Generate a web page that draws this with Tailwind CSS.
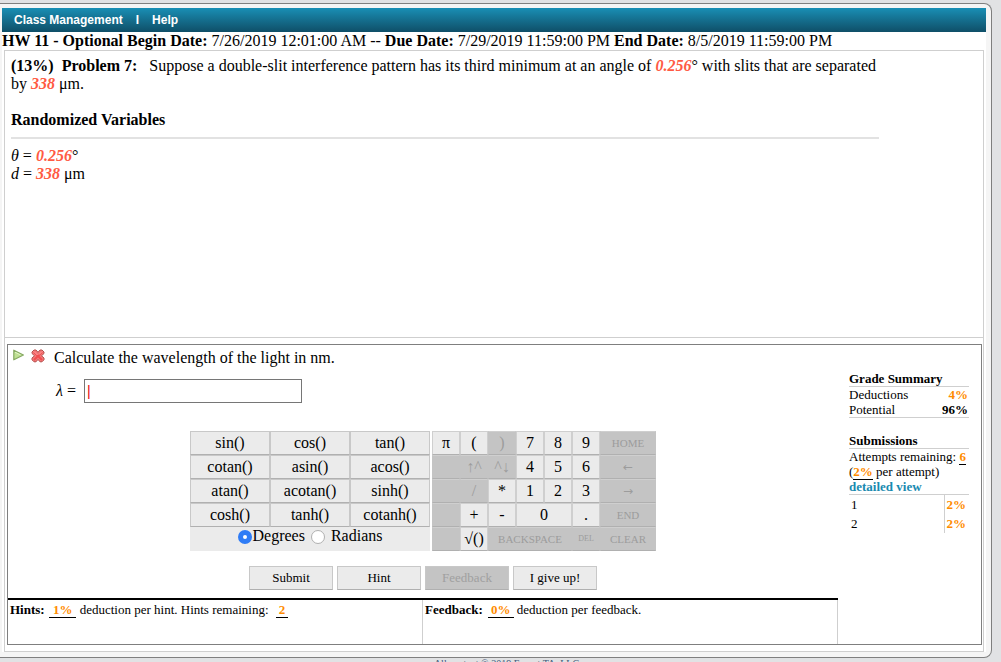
<!DOCTYPE html>
<html lang="en">
<head>
<meta charset="utf-8">
<meta name="viewport" content="width=device-width, initial-scale=1">
<title>HW 11 - Problem 7</title>
<script src="https://cdn.jsdelivr.net/npm/@tailwindcss/browser@4"></script>
</head>
<body class="bg-[#e1e2e4] font-['Liberation_Serif',serif] text-black">
<div class="h-screen overflow-hidden pt-[3px]">
<div class="mr-[9px] rounded-r-lg border-y border-r border-[#7f7f7f] bg-[#f5f5f5] pt-1 pr-[5px] pb-[5px] pl-[2px]">
  <nav class="flex h-6 items-center gap-[13px] bg-linear-to-b from-[#198fb5] to-[#0f4f68] pl-3 font-['Liberation_Sans',sans-serif] text-[12px] font-bold text-white">
    <a href="#">Class Management</a><span>I</span><a href="#">Help</a>
  </nav>
  <div class="bg-white pr-[2px]">
    <h1 class="h-[18px] text-[16px] leading-[18px] whitespace-nowrap"><b>HW 11 - Optional Begin Date:</b> 7/26/2019 12:01:00 AM -- <b>Due Date:</b> 7/29/2019 11:59:00 PM <b>End Date:</b> 8/5/2019 11:59:00 PM</h1>
    <main class="ml-[2px] border border-[#cfcfcf]">
      <section class="h-[287px] border-b border-[#cfcfcf] px-[6px] pt-[6px] text-[16px] leading-[18px]">
        <p class="max-w-[872px]"><b>(13%)</b>&nbsp; <b>Problem 7:</b> &nbsp; Suppose a double-slit interference pattern has its third minimum at an angle of <b class="text-[#ff5a43] italic">0.256</b>° with slits that are separated by <b class="text-[#ff5a43] italic">338</b> μm.</p>
        <h2 class="mt-[18px] font-bold">Randomized Variables</h2>
        <hr class="mt-2 mb-2 max-w-[868px] border-t-2 border-[#e2e2e2]">
        <p><i>θ</i> = <b class="text-[#ff5a43] italic">0.256</b>°</p>
        <p><i>d</i> = <b class="text-[#ff5a43] italic">338</b> μm</p>
      </section>
      <section class="mt-[6px] mr-[1px] mb-[6px] ml-[2px] flex border border-[#7f7f7f]">
        <div class="min-w-0 flex-1">
          <div class="flex h-[34px] pt-1 pl-[5px]">
            <svg class="h-3 w-3" viewBox="0 0 12 12"><path d="M.8 1.2 10.4 6 .8 10.8Z" fill="#bfe093" stroke="#86a862" stroke-width="1.2" stroke-linejoin="round"/><path d="M2 3.2 7.6 6" fill="none" stroke="#e2f5c6"/></svg>
            <svg class="ml-[6px] h-[14px] w-[14px]" viewBox="0 0 14 14"><path d="M3 1 5 1 7 3.3 9 1 11 1 13 3 13 4.5 10.5 6.8 13 9 13 10.8 11 12.8 9 12.8 7 10.4 5 12.8 3 12.8 1 10.8 1 9 3.5 6.8 1 4.5 1 3Z" fill="#f47a7a" stroke="#b5504e" stroke-width="1"/><path d="M3 3 11 11M11 3 3 11" stroke="#f04e50" stroke-width="2"/><path d="M3 2.5 6.5 6M11 2.5 8 5.5" stroke="#ffb5b5" stroke-width="1"/></svg>
            <p class="ml-[9px] text-[16px] leading-[18px]">Calculate the wavelength of the light in nm.</p>
          </div>
          <div class="flex h-6 items-center pl-12 text-[16px]">
            <label for="ans" class="w-7 whitespace-nowrap"><i>λ</i> =</label>
            <input id="ans" type="text" value="|" class="h-6 w-[218px] border border-[#767676] bg-white px-[2px] font-['Liberation_Sans',sans-serif] text-[14px] text-red-600 outline-none">
          </div>
          <div class="mt-7 flex items-start justify-center gap-[2px]">
            <div class="w-60 bg-[#ebebeb]">
              <div class="grid grid-cols-3 text-[16px] leading-[22px] [&>button]:h-6 [&>button]:border [&>button]:border-[#c8c8c8] [&>button]:border-b-[#b0b0b0] [&>button]:bg-[#ebebeb]">
                <button>sin()</button><button>cos()</button><button>tan()</button>
                <button>cotan()</button><button>asin()</button><button>acos()</button>
                <button>atan()</button><button>acotan()</button><button>sinh()</button>
                <button>cosh()</button><button>tanh()</button><button>cotanh()</button>
              </div>
              <div class="flex h-6 justify-center text-[16px] leading-[18px]">
                <input id="deg" type="radio" name="unit" checked class="mt-[3px] mr-[1px] h-[14px] w-[14px] appearance-none rounded-full border-[#2f7cf6] bg-white checked:border-[5px]"><label for="deg">Degrees</label>
                <input id="rad" type="radio" name="unit" class="mt-[3px] mr-[6px] ml-[6px] h-[14px] w-[14px] appearance-none rounded-full border border-[#b0b0b0] bg-white checked:border-[5px] checked:border-[#2f7cf6]"><label for="rad">Radians</label>
              </div>
            </div>
            <div class="grid w-56 grid-cols-8 text-[16px] leading-[22px] [&>button]:h-6 [&>button]:border [&>button]:border-[#cfcfcf] [&>button]:border-b-[#b0b0b0] [&>button]:bg-[#ebebeb] [&>button]:whitespace-nowrap [&>button:disabled]:border-x-[#c4c4c4] [&>button:disabled]:bg-[#c4c4c4] [&>button:disabled]:text-[#9c9c9c]">
              <button>π</button><button>(</button><button disabled>)</button><button>7</button><button>8</button><button>9</button><button disabled class="col-span-2 text-[11px]">HOME</button>
              <button disabled></button><button disabled>↑^</button><button disabled>^↓</button><button>4</button><button>5</button><button>6</button><button disabled class="col-span-2 font-['DejaVu_Sans',sans-serif] text-[12px]">←</button>
              <button disabled></button><button disabled>/</button><button>*</button><button>1</button><button>2</button><button>3</button><button disabled class="col-span-2 font-['DejaVu_Sans',sans-serif] text-[12px]">→</button>
              <button disabled></button><button>+</button><button>-</button><button class="col-span-2">0</button><button>.</button><button disabled class="col-span-2 text-[11px]">END</button>
              <button disabled></button><button>√()</button><button disabled class="col-span-3 text-[11px]">BACKSPACE</button><button disabled class="text-[8px]">DEL</button><button disabled class="col-span-2 text-[11px]">CLEAR</button>
            </div>
          </div>
          <div class="mt-[15px] flex justify-center gap-1 text-[13px] leading-[22px] [&>button]:h-6 [&>button]:w-[84px] [&>button]:border [&>button]:border-[#c8c8c8] [&>button]:border-b-[#b0b0b0] [&>button]:bg-[#ebebeb] [&>button:disabled]:bg-[#c4c4c4] [&>button:disabled]:text-[#a0a0a0]">
            <button>Submit</button><button>Hint</button><button disabled>Feedback</button><button>I give up!</button>
          </div>
          <div class="mt-2 grid h-[46px] grid-cols-2 border-t-2 border-black text-[13px] leading-[15px]">
            <div class="border-r border-[#cfcfcf] pt-[2px] pl-[2px]"><b>Hints:</b> <b class="ml-[1px] inline-block border-b border-black px-1 text-[#ff8c00]">1%</b> deduction per hint. Hints remaining: <b class="ml-1 inline-block border-b border-black px-[3px] text-[#ff8c00]">2</b></div>
            <div class="border-r border-[#cfcfcf] pt-[2px] pl-[2px]"><b>Feedback:</b> <b class="ml-[2px] inline-block border-b border-black px-[3px] text-[#ff8c00]">0%</b> deduction per feedback.</div>
          </div>
        </div>
        <aside class="w-[143px] pt-[26px] pr-3 pl-[11px] text-[13px] leading-[15px]">
          <h3 class="border-b border-[#cfcfcf] font-bold">Grade Summary</h3>
          <dl class="grid grid-cols-[1fr_auto] border-b border-[#cfcfcf] pr-[1px]">
            <dt>Deductions</dt><dd class="text-right font-bold text-[#ff8c00]">4%</dd>
            <dt>Potential</dt><dd class="text-right font-bold">96%</dd>
          </dl>
          <h3 class="mt-[15px] border-b border-[#cfcfcf] font-bold">Submissions</h3>
          <p class="whitespace-nowrap">Attempts remaining: <b class="border-b border-black text-[#ff8c00]">6</b></p>
          <p>(<b class="border-b border-black text-[#ff8c00]">2%</b> per attempt)</p>
          <a href="#" class="block font-bold text-[#1a8ab0]">detailed view</a>
          <table class="w-full border-t border-[#cfcfcf] leading-[19px]">
            <tbody>
              <tr><td class="pl-[2px]">1</td><td class="w-[25px] border-l border-[#cfcfcf] pl-[2px] font-bold text-[#ff8c00]">2%</td></tr>
              <tr><td class="pl-[2px]">2</td><td class="w-[25px] border-l border-[#cfcfcf] pl-[2px] font-bold text-[#ff8c00]">2%</td></tr>
            </tbody>
          </table>
        </aside>
      </section>
    </main>
  </div>
</div>
<footer class="pl-3 text-center text-[10px] leading-[12px] text-[#41597a]">All content © 2019 Expert TA, LLC</footer>
</div>
</body>
</html>
